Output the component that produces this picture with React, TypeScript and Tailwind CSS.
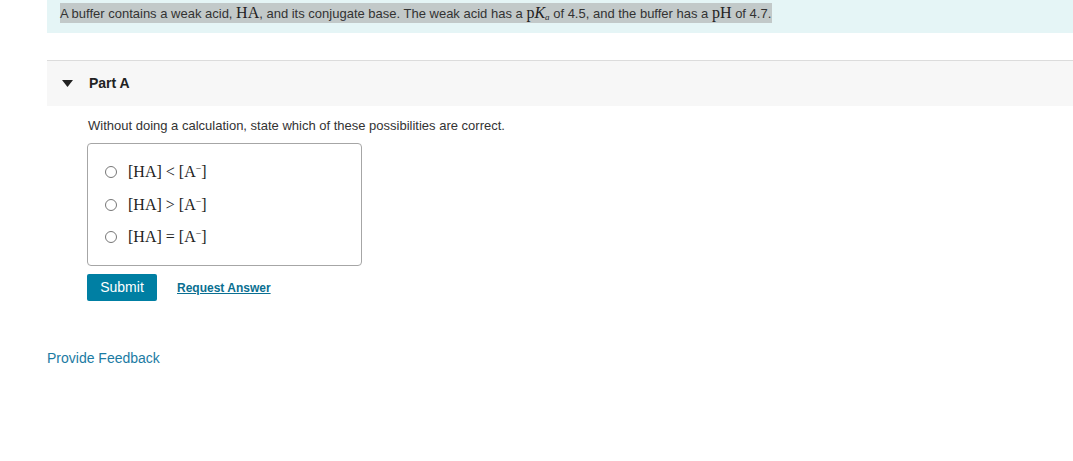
import React from "react";

function Math({ children }: { children: React.ReactNode }) {
  return (
    <span className="font-['Liberation_Serif',serif] text-[16px] text-[#222]">{children}</span>
  );
}

function Choice({ op }: { op: string }) {
  return (
    <label className="flex items-center h-[32.5px]">
      <span className="w-[12px] h-[12px] rounded-full border border-[#777] bg-white" />
      <span className="ml-[11px] font-['Liberation_Serif',serif] text-[16px] text-[#222]">
        [HA]<span className="px-[4px]">{op}</span>[A<sup className="text-[10px] -top-[5px]">−</sup>]
      </span>
    </label>
  );
}

export default function App() {
  return (
    <div className="w-[1073px] h-[461px] bg-white font-['Liberation_Sans',Arial,sans-serif] text-[13px] text-[#333]">
      {/* problem statement */}
      <div className="ml-[47px] h-[33px] bg-[#e5f5f6] pl-[13px] pt-[3px]">
        <span className="bg-[#c2c9c9] leading-[19px] inline-block pr-[1px] text-[#333]">
          A buffer contains a weak acid, <Math>HA</Math>, and its conjugate base. The weak acid has a{" "}
          <Math>
            p<i>K</i>
            <sub className="text-[9px] italic">a</sub>
          </Math>{" "}
          of 4.5, and the buffer has a <Math>pH</Math> of 4.7.
        </span>
      </div>

      {/* part header */}
      <div className="mt-[27px] ml-[47px] h-[46px] bg-[#f7f7f7] border-t border-[#dcdcdc] flex items-center">
        <svg className="ml-[15px] w-[11px] h-[7px]" viewBox="0 0 11 7">
          <path d="M0 0h11L5.5 7z" fill="#222" />
        </svg>
        <span className="ml-[16px] font-bold text-[14px] text-[#222]">Part A</span>
      </div>

      <div className="ml-[87px]">
        <p className="mt-[12px] ml-[1px] text-[13px] leading-[16px] text-[#333]">
          Without doing a calculation, state which of these possibilities are correct.
        </p>

        <div className="mt-[9px] w-[275px] h-[123px] border border-[#a6a6a6] rounded-[4px] pl-[17px] pt-[12px]">
          <Choice op="<" />
          <Choice op=">" />
          <Choice op="=" />
        </div>

        <div className="mt-[8px] flex items-center">
          <button className="w-[70px] h-[27px] bg-[#007fa3] text-white text-[14px] rounded-[2px]">
            Submit
          </button>
          <a className="ml-[20px] text-[12px] font-bold text-[#0a6f91] underline">Request Answer</a>
        </div>
      </div>

      <a className="block mt-[47px] ml-[47px] text-[14px] text-[#1b7ba3]">Provide Feedback</a>
    </div>
  );
}
